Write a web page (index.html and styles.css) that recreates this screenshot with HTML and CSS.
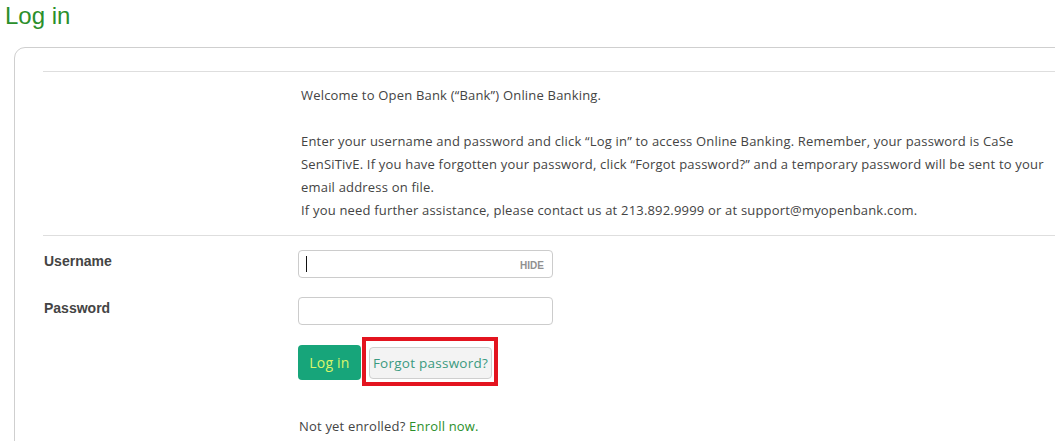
FILE: index.html
```html
<!DOCTYPE html>
<html>
<head>
<meta charset="utf-8">
<link rel="stylesheet" href="styles.css">
</head>
<body>
<h1 class="title">Log in</h1>
<div class="card">
  <div class="intro">
    <div class="intro-text">
      <p>Welcome to Open Bank (“Bank”) Online Banking.</p>
      <p class="gap">Enter your username and password and click “Log in” to access Online Banking. Remember, your password is CaSe SenSiTivE. If you have forgotten your password, click “Forgot password?” and a temporary password will be sent to your email address on file.</p>
      <p>If you need further assistance, please contact us at 213.892.9999 or at support@myopenbank.com.</p>
    </div>
  </div>
  <div class="form">
    <div class="row">
      <label class="label">Username</label>
      <div class="field">
        <span class="caret"></span>
        <span class="hide">HIDE</span>
      </div>
    </div>
    <div class="row">
      <label class="label">Password</label>
      <div class="field"></div>
    </div>
    <div class="row actions">
      <div class="spacer"></div>
      <div class="buttons">
        <button class="btn-primary">Log in</button>
        <div class="highlight-wrap">
          <button class="btn-secondary">Forgot password?</button>
          <span class="highlight"></span>
        </div>
      </div>
    </div>
    <div class="row enroll">
      <div class="spacer"></div>
      <p class="enroll-text">Not yet enrolled? <a class="link">Enroll now.</a></p>
    </div>
  </div>
</div>
</body>
</html>
```

FILE: styles.css
```css
html, body {
  margin: 0;
  padding: 0;
  background: #fff;
  overflow: hidden;
}
body {
  width: 1055px;
  height: 441px;
  font-family: "Open Sans", "Liberation Sans", sans-serif;
  color: #444;
}
.title {
  margin: 0;
  padding: 2px 0 0 5px;
  height: 45px;
  box-sizing: border-box;
  font-family: "Liberation Sans", Arial, sans-serif;
  font-weight: normal;
  font-size: 24px;
  line-height: 28px;
  color: #2b8f2b;
}
.card {
  margin-left: 14px;
  margin-top: 2px;
  width: 1100px;
  height: 500px;
  border: 1px solid #cfcfcf;
  border-top-left-radius: 11px;
  padding: 23px 0 0 28px;
  box-sizing: border-box;
}
.intro {
  border-top: 1px solid #dedede;
  border-bottom: 1px solid #dedede;
  padding: 12px 0 13px 258px;
}
.intro-text {
  width: 755px;
  font-size: 13px;
  letter-spacing: 0.19px;
  line-height: 23px;
}
.intro-text p {
  margin: 0;
}
.intro-text p.gap {
  margin-top: 23px;
}
.form {
  padding-top: 14px;
}
.row {
  display: flex;
  align-items: flex-start;
  margin-bottom: 19px;
}
.label {
  width: 255px;
  flex: none;
  font-family: "Liberation Sans", Arial, sans-serif;
  font-weight: bold;
  font-size: 14px;
  line-height: 18px;
  color: #444;
  padding-top: 2px;
  padding-left: 1px;
  box-sizing: border-box;
}
.field {
  width: 255px;
  height: 28px;
  box-sizing: border-box;
  border: 1px solid #cccccc;
  border-radius: 4px;
  display: flex;
  align-items: center;
  justify-content: space-between;
  padding: 0 8px 0 7px;
}
.caret {
  width: 1px;
  height: 16px;
  background: #111;
}
.hide {
  font-family: "Liberation Sans", Arial, sans-serif;
  font-weight: bold;
  font-size: 10px;
  color: #909090;
  padding-top: 2px;
}
.spacer {
  width: 255px;
  flex: none;
}
.actions {
  margin-top: 3px;
  margin-bottom: 35px;
}
.buttons {
  display: flex;
  align-items: flex-start;
  gap: 8px;
  padding-top: 1px;
}
.btn-primary {
  height: 35px;
  width: 63px;
  border: none;
  border-radius: 4px;
  background: #17a57a;
  color: #d9f56b;
  font-family: "Open Sans", sans-serif;
  font-size: 14px;
  letter-spacing: 0.2px;
  padding: 0;
}
.highlight-wrap {
  position: relative;
  display: flex;
  margin-top: 2px;
}
.btn-secondary {
  height: 32px;
  width: 123px;
  border: 1px solid #cfcfcf;
  border-radius: 4px;
  background: #f3f3f3;
  color: #3b9a80;
  font-family: "Open Sans", sans-serif;
  font-size: 13.5px;
  letter-spacing: 0.25px;
  padding: 0;
}
.highlight {
  position: absolute;
  left: -7px;
  top: -10px;
  width: 136px;
  height: 49px;
  border: 4px solid #e3141f;
  box-sizing: border-box;
}
.enroll-text {
  margin: 0;
  font-size: 13px;
  letter-spacing: 0.19px;
  line-height: 20px;
  color: #444;
  padding-left: 1px;
  padding-top: 1px;
}
.link {
  color: #2b8f2b;
}
```
